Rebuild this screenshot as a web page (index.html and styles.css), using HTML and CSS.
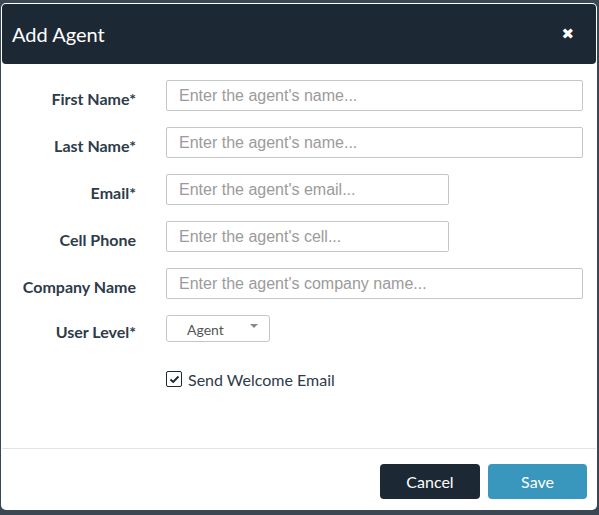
FILE: index.html
```html
<!DOCTYPE html>
<html>
<head>
<meta charset="utf-8">
<link rel="stylesheet" href="styles.css">
</head>
<body>
<div class="modal">
  <div class="modal-header">
    <h1 class="title">Add Agent</h1>
    <span class="close">✖</span>
  </div>
  <form class="form">
    <label class="label">First Name*</label>
    <input class="input wide" placeholder="Enter the agent's name...">
    <label class="label">Last Name*</label>
    <input class="input wide" placeholder="Enter the agent's name...">
    <label class="label">Email*</label>
    <input class="input mid" placeholder="Enter the agent's email...">
    <label class="label">Cell Phone</label>
    <input class="input mid" placeholder="Enter the agent's cell...">
    <label class="label">Company Name</label>
    <input class="input wide" placeholder="Enter the agent's company name...">
    <label class="label lvl">User Level*</label>
    <div class="select"><span>Agent</span><span class="caret"></span></div>
    <span></span>
    <div class="check-row">
      <span class="checkbox"><svg width="11" height="9" viewBox="0 0 11 9"><path d="M1.5 4.5 L4.2 7 L9.5 1.5" fill="none" stroke="#1c2833" stroke-width="1.9"/></svg></span>
      <span class="check-text">Send Welcome Email</span>
    </div>
  </form>
  <div class="footer">
    <button class="btn cancel" type="button">Cancel</button>
    <button class="btn save" type="button">Save</button>
  </div>
</div>
</body>
</html>
```
FILE: styles.css
```css
html, body {
  margin: 0;
  padding: 0;
  background: #3b4853;
  height: 515px;
  overflow: hidden;
}
.modal {
  margin: 3px 2px 0 1px;
  height: 507px;
  background: #fff;
  border-radius: 5px;
  box-sizing: border-box;
  padding: 1px;
  display: flex;
  flex-direction: column;
  font-family: Lato, "Liberation Sans", sans-serif;
}
.modal-header {
  height: 60px;
  flex: none;
  background: #1c2833;
  border-radius: 4px;
  display: flex;
  align-items: center;
  justify-content: space-between;
  padding: 0 22px 0 10px;
}
.title {
  margin: 0;
  color: #fff;
  font-size: 20px;
  font-weight: 400;
}
.close {
  color: #fff;
  font-size: 15px;
  font-family: "DejaVu Sans", sans-serif;
}
.form {
  display: grid;
  grid-template-columns: 134px auto;
  column-gap: 30px;
  row-gap: 16px;
  align-items: center;
  align-content: start;
  justify-items: start;
  padding: 16px 0 0 0;
  margin: 0;
}
.label {
  justify-self: end;
  padding-top: 5px;
  color: #2d3b4a;
  font-size: 16px;
  font-weight: 700;
}
.input {
  height: 31px;
  box-sizing: border-box;
  border: 1px solid #c4c6c8;
  border-radius: 2px;
  padding: 0 12px;
  font-family: "Liberation Sans", Arial, sans-serif;
  font-size: 16px;
  color: #333;
  outline: none;
}
.input::placeholder { color: #9b9b9b; }
.wide { width: 417px; }
.mid { width: 283px; }
.select {
  width: 104px;
  height: 27px;
  box-sizing: border-box;
  border: 1px solid #c4c6c8;
  border-radius: 3px;
  display: flex;
  align-items: center;
  justify-content: space-between;
  padding: 2px 11px 0 20px;
  font-size: 14px;
  color: #555;
}
.caret {
  width: 0;
  height: 0;
  border-left: 4px solid transparent;
  border-right: 4px solid transparent;
  border-top: 4px solid #888;
  margin-top: -8px;
}
.check-row {
  display: flex;
  align-items: center;
  gap: 6px;
  height: 16px;
  margin-top: 13px;
}
.checkbox {
  width: 16px;
  height: 16px;
  box-sizing: border-box;
  border: 1.5px solid #1c2833;
  border-radius: 2px;
  display: flex;
  align-items: center;
  justify-content: center;
}
.check-text {
  font-size: 16px;
  color: #2d3b4a;
}
.footer {
  border-top: 1px solid #e3e3e3;
  display: flex;
  justify-content: flex-end;
  gap: 8px;
  padding: 15px 9px 0 0;
  margin-top: 61px;
}
.btn {
  width: 100px;
  height: 35px;
  border: none;
  border-radius: 4px;
  color: #fff;
  font-family: Lato, sans-serif;
  font-size: 16px;
}
.cancel { background: #1c2833; }
.save { background: #3996bc; width: 99px; }
```
